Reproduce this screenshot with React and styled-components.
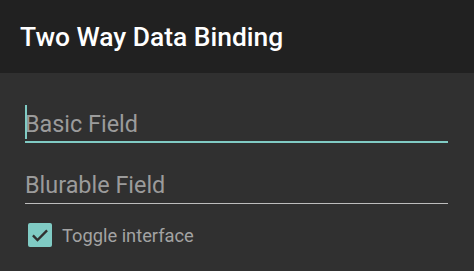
import React, { useState } from 'react';
import styled, { createGlobalStyle } from 'styled-components';

const GlobalStyle = createGlobalStyle`
  html, body {
    margin: 0;
    padding: 0;
    background: #303030;
    font-family: Roboto, "Noto Sans", sans-serif;
  }
`;

const Screen = styled.div`
  width: 474px;
  height: 271px;
  background: #303030;
  display: flex;
  flex-direction: column;
  overflow: hidden;
`;

const Toolbar = styled.header`
  height: 73px;
  flex-shrink: 0;
  background: #212121;
  display: flex;
  align-items: center;
  padding: 0 20px;
  box-sizing: border-box;
  h1 {
    margin: 0;
    font-size: 26.4px;
    font-weight: 500;
    color: #fff;
    letter-spacing: 0;
  }
`;

const Content = styled.main`
  padding: 30px 26px 0 25px;
  display: flex;
  flex-direction: column;
`;

const Field = styled.label`
  display: block;
  position: relative;
  height: ${p => p.$height}px;
  margin-top: ${p => p.$top}px;
  border-bottom: ${p => (p.$focused ? '2px solid #80cbc4' : '1px solid #bdbdbd')};
  box-sizing: border-box;
`;

const Input = styled.input`
  width: 100%;
  height: 100%;
  border: none;
  outline: none;
  background: transparent;
  padding: 4px 0 0;
  box-sizing: border-box;
  font-family: Roboto, sans-serif;
  font-size: 23.4px;
  color: #fff;
  caret-color: #80cbc4;
  &::placeholder {
    color: #9b9b9b;
  }
`;

const Caret = styled.span`
  position: absolute;
  left: 0;
  top: 2px;
  width: 2px;
  height: 34px;
  background: #80cbc4;
`;

const CheckRow = styled.label`
  display: flex;
  align-items: center;
  gap: 10px;
  margin-top: 19px;
  padding-left: 3px;
  font-size: 18.3px;
  color: #a3a3a3;
  cursor: pointer;
`;

const Box = styled.span`
  width: 24px;
  height: 24px;
  border-radius: 2px;
  background: ${p => (p.$checked ? '#80cbc4' : 'transparent')};
  border: ${p => (p.$checked ? 'none' : '2px solid #bdbdbd')};
  box-sizing: border-box;
  display: flex;
  align-items: center;
  justify-content: center;
`;

const App = () => {
  const [checked, setChecked] = useState(true);

  return (
    <Screen>
      <GlobalStyle />
      <Toolbar>
        <h1>Two Way Data Binding</h1>
      </Toolbar>
      <Content>
        <Field $focused $height={40} $top={0}>
          <Caret />
          <Input placeholder="Basic Field" />
        </Field>
        <Field $height={41} $top={20}>
          <Input placeholder="Blurable Field" />
        </Field>
        <CheckRow onClick={() => setChecked(!checked)}>
          <Box $checked={checked}>
            {checked && (
              <svg width="20" height="20" viewBox="0 0 24 24">
                <path d="M3.5 12.5l5.5 5.5L20.5 6.5" fill="none" stroke="#303030" strokeWidth="2.8" />
              </svg>
            )}
          </Box>
          Toggle interface
        </CheckRow>
      </Content>
    </Screen>
  );
};

export default App;
